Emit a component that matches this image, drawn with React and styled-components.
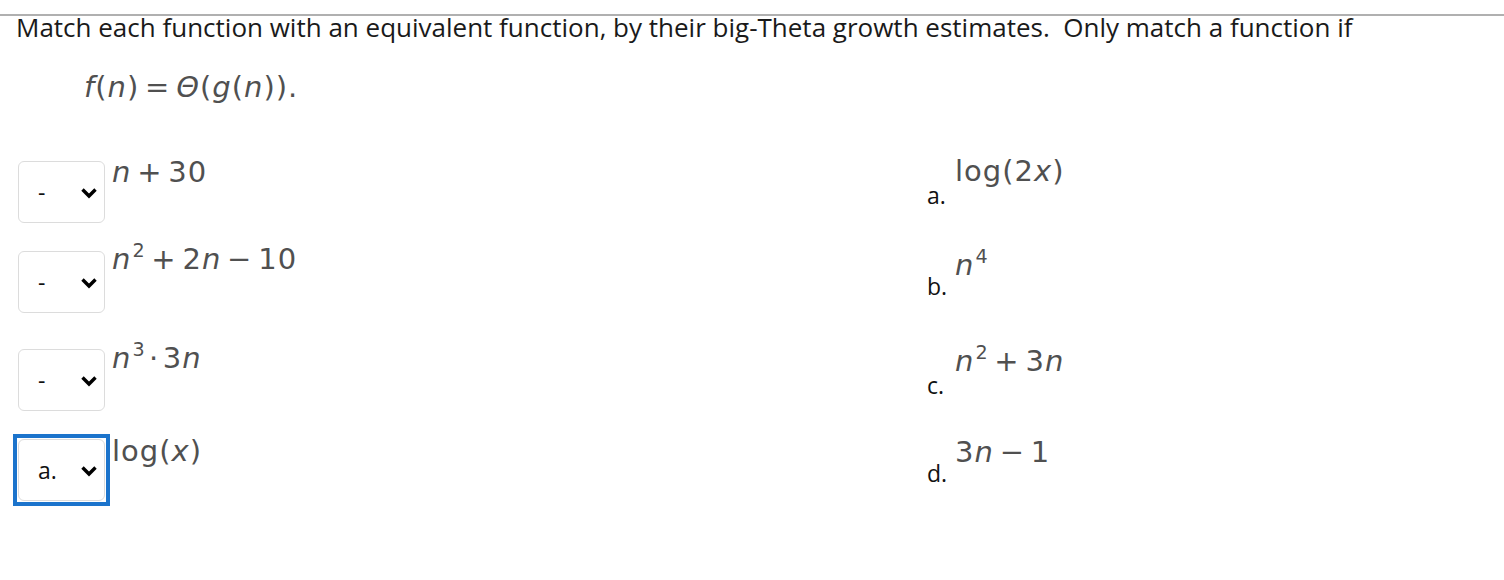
import React from "react";
import styled, { createGlobalStyle } from "styled-components";

const GlobalStyle = createGlobalStyle`
  body {
    margin: 0;
    background: #ffffff;
    font-family: "Open Sans", "Liberation Sans", sans-serif;
    color: #1f1f1f;
  }
`;

const Page = styled.div`
  margin-top: 14px;
  border-top: 2px solid #b0b0b0;
  height: 560px;
`;

const Prompt = styled.p`
  margin: 0;
  padding-left: 16px;
  font-size: 26px;
  line-height: 22px;
  color: #1a1a1a;
  white-space: nowrap;
`;

const Formula = styled.div`
  padding: 35px 0 0 84px;
`;

const MathExpr = styled.span`
  display: inline-block;
  font-family: "DejaVu Sans", sans-serif;
  font-size: 29px;
  line-height: 28px;
  letter-spacing: 1px;
  color: #505050;
  white-space: nowrap;
  margin-top: ${(p) => p.$drop || 0}px;
`;

const Italic = styled.span`
  font-style: italic;
`;

const Op = styled.span`
  margin: 0 0.2em;
`;

const Dot = styled.span`
  margin: 0 0.12em;
`;

const Sup = styled.sup`
  font-size: 0.66em;
  vertical-align: 0.64em;
  line-height: 0;
  margin-left: 1px;
`;

const Matches = styled.div`
  padding: 59px 0 0 18px;
`;

const MatchRow = styled.div`
  display: grid;
  grid-template-columns: 909px 1fr;
  margin-top: ${(p) => p.$gapTop}px;
`;

const LeftCell = styled.div`
  display: flex;
  align-items: flex-start;
  gap: 7px;
`;

// square focus ring sits around the rounded box, not following its corners
const SelectFrame = styled.div`
  flex: none;
  outline: ${(p) => (p.$focused ? "4px solid #1c74cc" : "none")};
  outline-offset: 1px;
`;

const SelectBox = styled.div`
  box-sizing: border-box;
  width: 87px;
  height: 62px;
  display: flex;
  align-items: center;
  justify-content: space-between;
  padding: 0 6px 0 19px;
  border: 1.5px solid #dcdcdc;
  border-radius: 6px;
  background: #fff;
  font-size: 23px;
  color: #111;
  svg {
    margin-top: 1px;
  }
`;

const RightCell = styled.div`
  display: flex;
  align-items: flex-start;
`;

const Letter = styled.span`
  width: 28px;
  font-size: 23px;
  line-height: 24px;
  color: #111;
  margin-top: ${(p) => p.$drop}px;
`;

const V = ({ children }) => <Italic>{children}</Italic>;

const Chevron = () => (
  <svg width="18" height="12" viewBox="0 0 18 12" aria-hidden="true">
    <path
      d="M2.5 2.5 L9 9 L15.5 2.5"
      fill="none"
      stroke="#000"
      strokeWidth="3.4"
      strokeLinejoin="miter"
    />
  </svg>
);

// left column functions and the lettered options they are matched against
const rows = [
  {
    id: 1,
    choice: "-",
    fn: (
      <>
        <V>n</V><Op>+</Op>30
      </>
    ),
    letter: "a.",
    option: <>log(2<V>x</V>)</>,
    gapTop: 0,
    fnDrop: -3,
    optDrop: -4,
    letterDrop: 22,
  },
  {
    id: 2,
    choice: "-",
    fn: (
      <>
        <V>n</V><Sup>2</Sup><Op>+</Op>2<V>n</V><Op>−</Op>10
      </>
    ),
    letter: "b.",
    option: (
      <>
        <V>n</V><Sup>4</Sup>
      </>
    ),
    gapTop: 28,
    fnDrop: -6,
    optDrop: 0,
    letterDrop: 23,
  },
  {
    id: 3,
    choice: "-",
    fn: (
      <>
        <V>n</V><Sup>3</Sup><Dot>·</Dot>3<V>n</V>
      </>
    ),
    letter: "c.",
    option: (
      <>
        <V>n</V><Sup>2</Sup><Op>+</Op>3<V>n</V>
      </>
    ),
    gapTop: 36,
    fnDrop: -5,
    optDrop: -2,
    letterDrop: 24,
  },
  {
    id: 4,
    choice: "a.",
    focused: true,
    fn: <>log(<V>x</V>)</>,
    letter: "d.",
    option: (
      <>
        3<V>n</V><Op>−</Op>1
      </>
    ),
    gapTop: 28,
    fnDrop: -2,
    optDrop: -1,
    letterDrop: 22,
  },
];

export default function App() {
  return (
    <>
      <GlobalStyle />
      <Page>
        <Prompt>
          Match each function with an equivalent function, by their big-Theta growth
          estimates.&nbsp; Only match a function if
        </Prompt>
        <Formula>
          <MathExpr>
            <V>f</V>(<V>n</V>)<Op>=</Op><V>Θ</V>(<V>g</V>(<V>n</V>)).
          </MathExpr>
        </Formula>
        <Matches>
          {rows.map((r) => (
            <MatchRow key={r.id} $gapTop={r.gapTop}>
              <LeftCell>
                <SelectFrame $focused={r.focused}>
                  <SelectBox>
                    <span>{r.choice}</span>
                    <Chevron />
                  </SelectBox>
                </SelectFrame>
                <MathExpr $drop={r.fnDrop}>{r.fn}</MathExpr>
              </LeftCell>
              <RightCell>
                <Letter $drop={r.letterDrop}>{r.letter}</Letter>
                <MathExpr $drop={r.optDrop}>{r.option}</MathExpr>
              </RightCell>
            </MatchRow>
          ))}
        </Matches>
      </Page>
    </>
  );
}
